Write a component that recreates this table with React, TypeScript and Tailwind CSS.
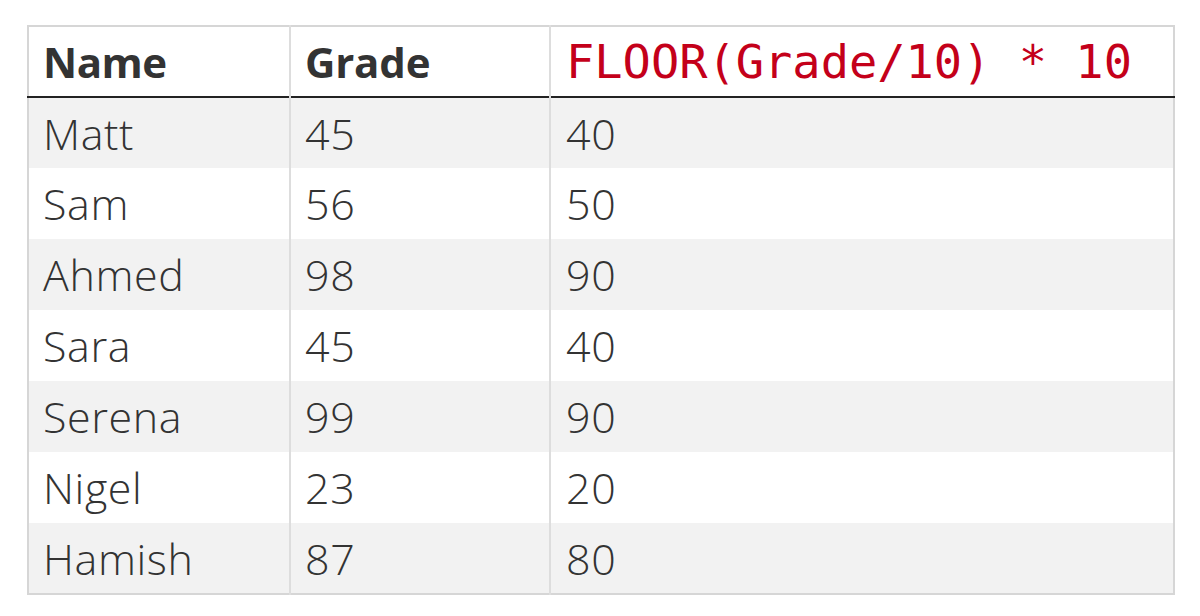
import React from "react";

const rows: [string, number, number][] = [
  ["Matt", 45, 40],
  ["Sam", 56, 50],
  ["Ahmed", 98, 90],
  ["Sara", 45, 40],
  ["Serena", 99, 90],
  ["Nigel", 23, 20],
  ["Hamish", 87, 80],
];

export default function App() {
  return (
    <div className="w-[1200px] h-[616px] bg-white pt-[25px] pl-[27px]">
      <table
        className="w-[1148px] border-collapse border-2 border-[#d6d6d6] text-[#333333]"
        style={{ fontFamily: '"Open Sans", "Noto Sans", sans-serif' }}
      >
        <thead>
          <tr className="h-[71px] border-b-2 border-[#222222]">
            <th className="w-[262px] pl-[14px] text-left text-[42px] font-bold leading-none tracking-[-0.5px]">
              Name
            </th>
            <th className="w-[260px] pl-[14px] text-left text-[42px] font-bold leading-none tracking-[-0.2px] border-l-2 border-[#dddddd]">
              Grade
            </th>
            <th
              className="pl-[15px] text-left text-[47px] font-normal leading-none text-[#c4001a] border-l-2 border-[#dddddd]"
              style={{ fontFamily: '"DejaVu Sans Mono", "Liberation Mono", monospace' }}
            >
              FLOOR(Grade/10) * 10
            </th>
          </tr>
        </thead>
        <tbody>
          {rows.map(([name, grade, floor], i) => (
            <tr key={name} className={`h-[71px] ${i % 2 === 0 ? "bg-[#f2f2f2]" : "bg-white"}`}>
              <td className="pl-[14px] text-[43px] font-light leading-none tracking-[0.6px]">{name}</td>
              <td className="pl-[14px] text-[43px] font-light leading-none tracking-[0.6px] border-l-2 border-[#dddddd]">{grade}</td>
              <td className="pl-[15px] text-[43px] font-light leading-none tracking-[0.6px] border-l-2 border-[#dddddd]">{floor}</td>
            </tr>
          ))}
        </tbody>
      </table>
    </div>
  );
}
